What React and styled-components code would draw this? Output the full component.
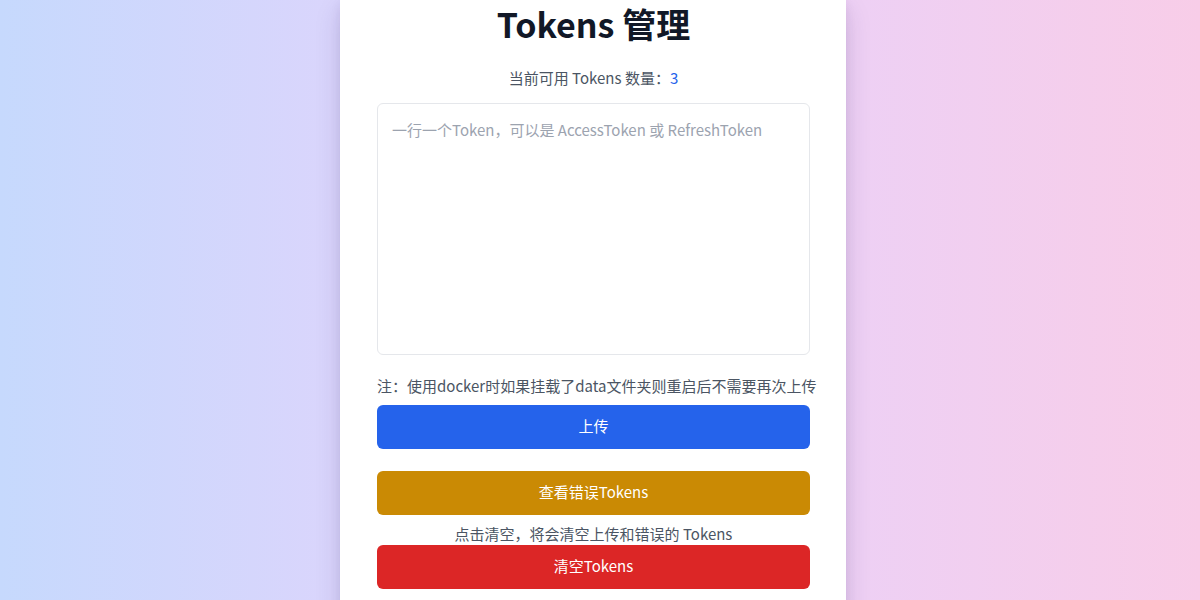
import React from "react";
import styled, { createGlobalStyle } from "styled-components";

const GlobalStyle = createGlobalStyle`
  html, body {
    margin: 0;
    padding: 0;
    height: 100%;
    overflow: hidden;
  }
  body {
    font-family: "Noto Sans CJK SC", "Noto Sans", sans-serif;
  }
`;

const Page = styled.div`
  height: 100vh;
  display: flex;
  justify-content: center;
  align-items: flex-start;
  padding-right: 14px;
  box-sizing: border-box;
  background: linear-gradient(to right, #c6d9fd 0%, #dad5fc 28%, #e5d3f9 50%, #eed0f4 72%, #f8cde8 100%);
`;

const Card = styled.div`
  width: 506px;
  box-sizing: border-box;
  padding: 4px 36px 32px 37px;
  background: #fff;
  box-shadow: 0 10px 25px rgba(40, 20, 90, 0.14), 0 4px 10px rgba(40, 20, 90, 0.08);
  display: flex;
  flex-direction: column;
`;

const Title = styled.h1`
  margin: 0;
  font-size: 34px;
  line-height: 40px;
  font-weight: 700;
  color: #111827;
  text-align: center;
`;

const Count = styled.p`
  margin: 22px 0 0;
  font-size: 15px;
  line-height: 24px;
  color: #4b5563;
  text-align: center;
  span {
    color: #2563eb;
  }
`;

const TokenInput = styled.textarea`
  margin-top: 13px;
  height: 252px;
  box-sizing: border-box;
  padding: 14px 14px;
  border: 1px solid #e5e7eb;
  border-radius: 6px;
  resize: none;
  font-family: inherit;
  font-size: 15px;
  line-height: 24px;
  color: #111827;
  outline: none;
  &::placeholder {
    color: #9ca3af;
  }
`;

const Note = styled.p`
  margin: ${({ $top }) => $top}px 0 0;
  font-size: 15px;
  line-height: ${({ $lh }) => $lh || 24}px;
  color: #4b5563;
  white-space: nowrap;
  text-align: ${({ $center }) => ($center ? "center" : "left")};
`;

const Button = styled.button`
  margin-top: ${({ $top }) => $top}px;
  height: 44px;
  border: none;
  border-radius: 6px;
  background: ${({ $bg }) => $bg};
  color: #fff;
  font-family: inherit;
  font-size: 15px;
  line-height: 20px;
  padding: 0 0 2px;
  cursor: pointer;
`;

export default function App() {
  return (
    <>
      <GlobalStyle />
      <Page>
        <Card>
          <Title>Tokens 管理</Title>
          <Count>
            当前可用 Tokens 数量：<span>3</span>
          </Count>
          <TokenInput placeholder="一行一个Token，可以是 AccessToken 或 RefreshToken" />
          <Note $top={19}>注：使用docker时如果挂载了data文件夹则重启后不需要再次上传</Note>
          <Button $top={7} $bg="#2563eb">上传</Button>
          <Button $top={22} $bg="#ca8a04">查看错误Tokens</Button>
          <Note $top={8} $lh={22} $center>点击清空，将会清空上传和错误的 Tokens</Note>
          <Button $top={0} $bg="#dc2626">清空Tokens</Button>
        </Card>
      </Page>
    </>
  );
}
